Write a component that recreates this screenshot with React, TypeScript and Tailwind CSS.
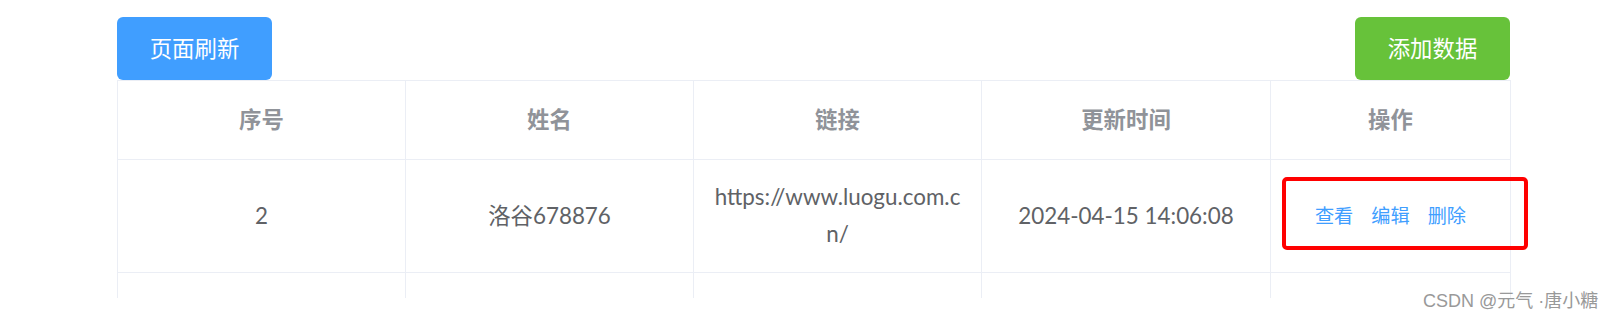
import React from "react";

const COLS = ["序号", "姓名", "链接", "更新时间", "操作"];

const ROW = {
  id: "2",
  name: "洛谷678876",
  url: "https://www.luogu.com.cn/",
  time: "2024-04-15 14:06:08",
};

const FONT = { fontFamily: 'Lato, "Noto Sans CJK SC", sans-serif' };

function Cell({ children, head = false, tall = false }: { children?: React.ReactNode; head?: boolean; tall?: boolean }) {
  return (
    <div
      className={`flex items-center justify-center border-r border-b border-[#ebeef5] px-4 text-center leading-[36.8px] ${
        head ? "h-[79px] font-bold text-[#909399]" : tall ? "h-[113px] text-[#606266]" : "h-[113px]"
      }`}
    >
      {children}
    </div>
  );
}

export default function App() {
  return (
    <div className="relative h-[319px] w-[1621px] overflow-hidden bg-white text-[22.4px]" style={FONT}>
      <div className="pl-[117px] pt-[17px]">
        {/* barre d'actions */}
        <div className="flex w-[1393px] justify-between">
          <button type="button" className="h-[63px] w-[155px] rounded-[6px] bg-[#409eff] text-white">
            页面刷新
          </button>
          <button type="button" className="h-[63px] w-[155px] rounded-[6px] bg-[#67c23a] text-white">
            添加数据
          </button>
        </div>

        <div className="h-[218px] w-[1394px] overflow-hidden border-t border-l border-[#ebeef5]">
          <div className="grid grid-cols-[288px_288px_288px_289px_240px]">
            {COLS.map((c) => (
              <Cell key={c} head>
                {c}
              </Cell>
            ))}

            <Cell tall>{ROW.id}</Cell>
            <Cell tall>{ROW.name}</Cell>
            <Cell tall>
              <span className="break-all">{ROW.url}</span>
            </Cell>
            <Cell tall>{ROW.time}</Cell>
            <Cell tall>
              <div className="flex gap-[18px] text-[19.2px] text-[#409eff]">
                <span>查看</span>
                <span>编辑</span>
                <span>删除</span>
              </div>
            </Cell>

            {COLS.map((c) => (
              <Cell key={`e-${c}`} />
            ))}
          </div>
        </div>
      </div>

      {/* annotation rouge */}
      <div className="absolute left-[1282px] top-[177px] h-[73px] w-[246px] rounded-[5px] border-4 border-[#ff0000]" />

      <div
        className="absolute left-[1423px] top-[288px] text-[18px] text-[#999999]"
        style={{ fontFamily: '"Liberation Sans", "Noto Sans CJK SC", sans-serif' }}
      >
        CSDN @元气 ·唐小糖
      </div>
    </div>
  );
}
